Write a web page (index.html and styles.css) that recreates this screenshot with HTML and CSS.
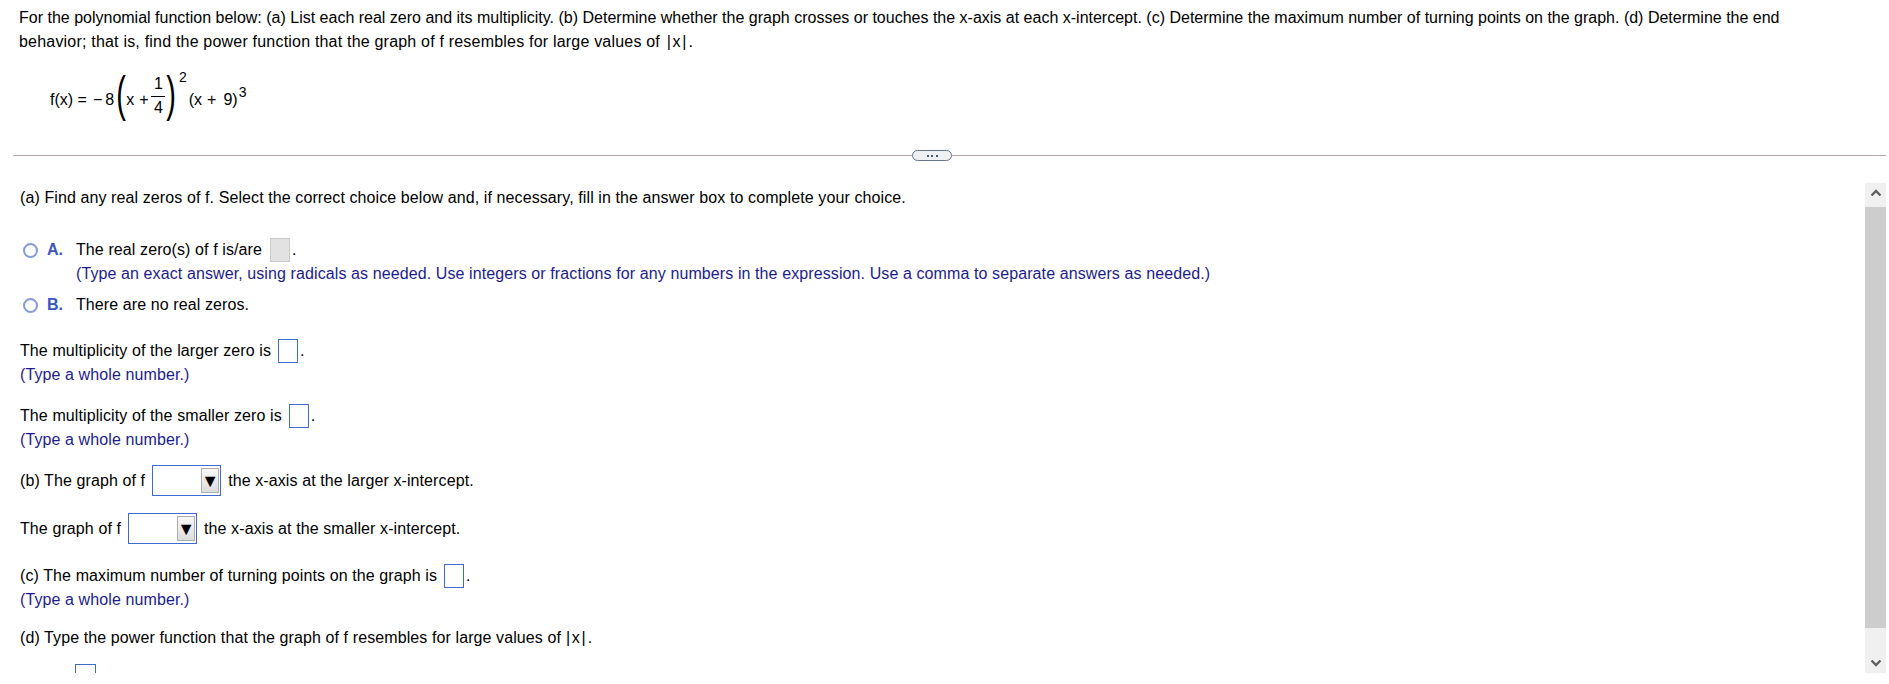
FILE: index.html
```html
<!DOCTYPE html>
<html lang="en">
<head>
<meta charset="utf-8">
<title>Polynomial function</title>
<link rel="stylesheet" href="styles.css">
</head>
<body>
<div class="header">
  <p class="intro">For the polynomial function below: (a) List each real zero and its multiplicity. (b) Determine whether the graph crosses or touches the x-axis at each x-intercept. (c) Determine the maximum number of turning points on the graph. (d) Determine the end <span class="intro-tail">behavior; that is, find the power function that the graph of f resembles for large values of <span class="abs">|<span class="abs-x">x</span>|</span><span class="abs-dot">.</span></span></p>
  <div class="formula">
    <span class="f-eq">f(x)&nbsp;=</span>
    <span class="f-minus">−</span>
    <span class="f-eight">8</span>
    <span class="paren paren-l">(</span>
    <span class="f-x">x</span>
    <span class="f-op">+</span>
    <span class="frac"><span class="num">1</span><span class="bar"></span><span class="den">4</span></span>
    <span class="paren paren-r">)</span>
    <span class="sup sup-2">2</span>
    <span class="f-x9">(x</span>
    <span class="f-op">+</span>
    <span class="f-9">9)</span>
    <span class="sup sup-3">3</span>
  </div>
</div>

<div class="divider">
  <span class="rule rule-left"></span>
  <span class="pill"><i></i><i></i><i></i></span>
  <span class="rule rule-right"></span>
</div>

<div class="pane">
  <div class="content">
    <div class="row q-a"><span>(a) Find any real zeros of f. Select the correct choice below and, if necessary, fill in the answer box to complete your choice.</span></div>

    <div class="row option opt-a">
      <span class="radio"></span><span class="opt-label">A.</span>
      <span>The real zero(s) of f is/are</span><span class="gbox"></span><span class="dot">.</span>
    </div>
    <div class="row hint hint-a"><span>(Type an exact answer, using radicals as needed. Use integers or fractions for any numbers in the expression. Use a comma to separate answers as needed.)</span></div>

    <div class="row option opt-b">
      <span class="radio"></span><span class="opt-label">B.</span>
      <span>There are no real zeros.</span>
    </div>

    <div class="row mult-large"><span>The multiplicity of the larger zero is</span><span class="box"></span><span class="dot">.</span></div>
    <div class="row hint"><span>(Type a whole number.)</span></div>

    <div class="row mult-small"><span>The multiplicity of the smaller zero is</span><span class="box"></span><span class="dot">.</span></div>
    <div class="row hint"><span>(Type a whole number.)</span></div>

    <div class="row sel sel-1"><span>(b) The graph of f</span><span class="dropdown"><span class="dd-btn">▼</span></span><span>the x-axis at the larger x-intercept.</span></div>
    <div class="row sel sel-2"><span>The graph of f</span><span class="dropdown"><span class="dd-btn">▼</span></span><span>the x-axis at the smaller x-intercept.</span></div>

    <div class="row q-c"><span>(c) The maximum number of turning points on the graph is</span><span class="box"></span><span class="dot">.</span></div>
    <div class="row hint"><span>(Type a whole number.)</span></div>

    <div class="row q-d"><span>(d) Type the power function that the graph of f resembles for large values of</span><span class="abs abs-d">|<span class="abs-x">x</span>|</span><span class="abs-dot">.</span></div>
    <div class="row ans-d"><span class="box box-d"></span></div>
  </div>

  <div class="scrollbar">
    <div class="sb-btn sb-up"><svg width="12" height="8" viewBox="0 0 12 8"><polyline points="1.5,6.5 6,2 10.5,6.5" fill="none" stroke="#5f5f5f" stroke-width="2.4"/></svg></div>
    <div class="sb-thumb"></div>
    <div class="sb-track"></div>
    <div class="sb-btn sb-down"><svg width="12" height="8" viewBox="0 0 12 8"><polyline points="1.5,1.5 6,6 10.5,1.5" fill="none" stroke="#5f5f5f" stroke-width="2.4"/></svg></div>
  </div>
</div>
</body>
</html>
```

FILE: styles.css
```css
html, body {
  margin: 0;
  padding: 0;
  background: #ffffff;
}

body {
  width: 1889px;
  height: 684px;
  overflow: hidden;
  font-family: "Liberation Sans", Arial, sans-serif;
  font-size: 16px;
  color: #000000;
}

/* ---------- header ---------- */
.intro {
  margin: 0;
  padding: 6px 49px 0 19px;
  line-height: 24px;
}
.intro-tail { letter-spacing: 0.2px; }

.abs { margin-left: 2px; }
.abs-x { margin: 0 1.5px; }
.abs-dot { margin-left: 2px; }
.abs-d { margin-left: 5px; }

.formula {
  display: flex;
  align-items: center;
  height: 56px;
  margin-top: 18px;
  padding-left: 50px;
  line-height: 16px;
  white-space: nowrap;
}

.f-minus { margin-left: 6px; }
.f-eight { margin-left: 3px; }
.f-op { margin: 0 2px 0 5px; }
.f-9 { margin-left: 5px; }

.paren {
  display: block;
  width: 10px;
  text-align: center;
  font-size: 20px;
  line-height: 20px;
  align-self: flex-start;
  margin-top: 13.5px;
  transform-origin: 50% 11.8px;
  transform: scale(1.45, 2.5);
}
.paren-l { margin-left: 2px; }
.paren-r { margin-left: 1px; }

.frac {
  display: flex;
  flex-direction: column;
  align-items: center;
  align-self: flex-start;
  margin-top: 4px;
  margin-left: 1px;
  width: 14px;
}
.num, .den { line-height: 16px; }
.bar {
  width: 14px;
  height: 1px;
  background: #000;
  margin: 4px 0 3px;
}

.sup {
  font-size: 14px;
  line-height: 14px;
  align-self: flex-start;
}
.sup-2 { margin-left: 2.5px; margin-top: -2px; }
.sup-3 { margin-left: 1px; margin-top: 13px; }
.f-x9 { margin-left: 2px; }

/* ---------- divider ---------- */
.divider {
  display: flex;
  align-items: center;
  height: 11px;
  margin: 22px 3px 0 13px;
}
.rule {
  height: 1px;
  background: #b9a3ab;
}
.rule-left { width: 899px; }
.rule-right { flex: 1; }
.pill {
  box-sizing: border-box;
  width: 40px;
  height: 11px;
  border: 1.5px solid #66738a;
  border-radius: 6px;
  background: #eef0f4;
  display: flex;
  justify-content: center;
  align-items: center;
  gap: 2.5px;
}
.pill i {
  display: block;
  width: 2px;
  height: 2px;
  background: #4d5869;
}

/* ---------- scroll pane ---------- */
.pane {
  display: flex;
  height: 490px;
  margin-top: 22px;
}
.content {
  flex: 1;
  overflow: hidden;
  padding-left: 20px;
  letter-spacing: 0.1px;
}

.row {
  display: flex;
  align-items: center;
  height: 24px;
  line-height: 24px;
  white-space: nowrap;
}

.hint { color: #1c1c8e; }
.hint-a { margin-left: 56px; }

.q-a { margin-top: 3px; }
.opt-a { margin-top: 28px; }
.opt-b { margin-top: 7px; }
.mult-large { margin-top: 22px; }
.mult-small { margin-top: 17px; }
.sel { height: 31px; }
.sel-1 { margin-top: 13px; }
.sel-2 { margin-top: 17px; }
.q-c { margin-top: 20px; }
.q-d { margin-top: 14px; }
.ans-d { margin-top: 14px; }

.option { margin-left: 3px; }
.radio {
  flex: none;
  box-sizing: border-box;
  width: 15px;
  height: 15px;
  border-radius: 50%;
  border: 2px solid #849bd7;
  background: radial-gradient(circle, #ffffff 50%, #e4eaf8 100%);
  margin-right: 9px;
}
.opt-label {
  width: 29px;
  font-weight: bold;
  font-size: 16px;
  letter-spacing: 0;
  color: #3a55bd;
}

.gbox {
  flex: none;
  box-sizing: border-box;
  width: 20px;
  height: 24px;
  margin-left: 8px;
  border: 1px solid #c9c9c9;
  background: #e2e2e2;
}

.box {
  flex: none;
  box-sizing: border-box;
  width: 20px;
  height: 24px;
  margin-left: 7px;
  border: 1px solid #3b6bd3;
  background: #ffffff;
}
.box-d { margin-left: 55px; width: 21px; }

.dot { margin-left: 2px; }

.dropdown {
  flex: none;
  box-sizing: border-box;
  width: 69px;
  height: 31px;
  margin: 0 7px;
  border: 1px solid #3b6bd3;
  background: #ffffff;
  display: flex;
  justify-content: flex-end;
  padding: 2px 1px 2px 0;
}
.dd-btn {
  box-sizing: border-box;
  width: 18px;
  height: 100%;
  border: 1px solid #adadad;
  background: linear-gradient(#f8f8f8, #dcdcdc);
  display: flex;
  justify-content: center;
  align-items: center;
  font-size: 18px;
  line-height: 18px;
  letter-spacing: 0;
  color: #000;
}

/* ---------- scrollbar ---------- */
.scrollbar {
  flex: none;
  width: 21px;
  margin-right: 3px;
  display: flex;
  flex-direction: column;
  background: #f0f0f0;
}
.sb-btn {
  display: flex;
  justify-content: center;
  align-items: center;
  box-sizing: border-box;
}
.sb-up { height: 24px; padding-bottom: 4px; }
.sb-thumb { height: 421px; background: #cdcdcd; }
.sb-track { flex: 1; }
.sb-down { height: 22px; padding-top: 2px; }
```
